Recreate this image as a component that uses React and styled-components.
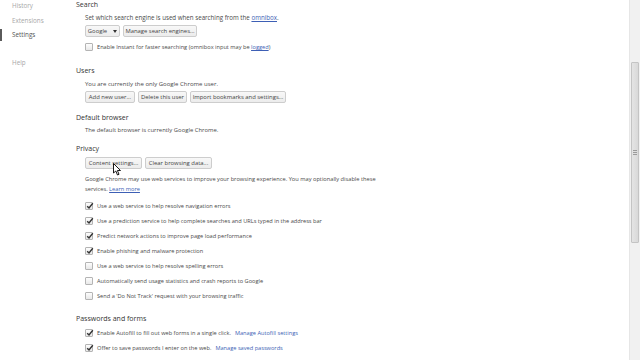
import styled, { createGlobalStyle } from 'styled-components';

const GlobalStyle = createGlobalStyle`
  html, body {
    margin: 0;
    padding: 0;
    background: #ffffff;
  }
  body {
    font-family: "Open Sans", "Noto Sans", "DejaVu Sans", sans-serif;
    color: #505050;
    -webkit-font-smoothing: antialiased;
  }
`;

const Page = styled.div`
  display: flex;
  width: 640px;
  height: 360px;
  overflow: hidden;
`;

const Sidebar = styled.nav`
  width: 76px;
  flex-shrink: 0;
  display: flex;
  flex-direction: column;
`;

const NavItem = styled.div`
  height: ${(p) => p.$h || 14}px;
  line-height: 10px;
  padding-left: 10px;
  padding-top: 1px;
  margin-top: ${(p) => p.$mt || 0}px;
  font-size: 6.3px;
  color: ${(p) => (p.$active ? '#555' : '#a8a8a8')};
  border-left: 2px solid ${(p) => (p.$active ? '#5a5a5a' : 'transparent')};
  box-sizing: border-box;
`;

const Main = styled.main`
  flex: 1;
  position: relative;
`;

const Heading = styled.h3`
  margin: ${(p) => p.$mt || 0}px 0 0;
  font-size: 7px;
  font-weight: 400;
  line-height: 10px;
  color: #333;
`;

const Body = styled.div`
  padding-left: 9px;
`;

const Text = styled.p`
  margin: ${(p) => p.$mt || 0}px 0 0;
  font-size: ${(p) => p.$fs || 6}px;
  line-height: ${(p) => p.$lh || 10}px;
  color: #4a4a4a;
  width: 300px;
`;

const Link = styled.a`
  color: #3d5fb5;
  text-decoration: ${(p) => (p.$plain ? 'none' : 'underline')};
  margin-left: ${(p) => p.$ml || 0}px;
`;

const ButtonRow = styled.div`
  display: flex;
  gap: 3px;
  margin-top: ${(p) => p.$mt || 0}px;
  height: 12px;
`;

const Button = styled.button`
  display: flex;
  align-items: center;
  justify-content: center;
  gap: 6px;
  width: ${(p) => p.$w}px;
  height: 12px;
  padding: 0;
  box-sizing: border-box;
  border: 1px solid #cdcdcd;
  border-radius: 2px;
  background: linear-gradient(#f8f8f8, #ececec);
  font-family: inherit;
  font-size: 5.9px;
  color: #444;
  white-space: nowrap;
`;

const Caret = styled.span`
  width: 0;
  height: 0;
  border-left: 2.5px solid transparent;
  border-right: 2.5px solid transparent;
  border-top: 3px solid #333;
`;

const CheckRow = styled.label`
  display: flex;
  align-items: center;
  gap: 4px;
  height: ${(p) => p.$h || 15}px;
  margin-top: ${(p) => p.$mt || 0}px;
  font-size: 5.65px;
  color: #4a4a4a;
  white-space: nowrap;
`;

const Box = styled.span`
  position: relative;
  width: 6px;
  height: 6px;
  border: 1px solid #b4b4b4;
  border-radius: 1px;
  background: linear-gradient(#fdfdfd, #e8e8e8);
  flex-shrink: 0;
  svg {
    position: absolute;
    left: 0;
    top: -1px;
  }
`;

const CheckList = styled.div`
  margin-top: 4.5px;
`;

const ScrollTrack = styled.div`
  width: 10px;
  flex-shrink: 0;
  background: #f1f1f1;
  border-left: 1px solid #e6e6e6;
  display: flex;
  flex-direction: column;
  align-items: center;
`;

const Thumb = styled.div`
  margin-top: 62px;
  width: 8px;
  height: 181px;
  box-sizing: border-box;
  border: 1px solid #c4c4c4;
  border-radius: 1px;
  background: linear-gradient(90deg, #e4e4e4, #d9d9d9);
  display: flex;
  flex-direction: column;
  justify-content: center;
  align-items: center;
  gap: 1px;
`;

const Grip = styled.span`
  width: 4px;
  height: 1px;
  background: #9a9a9a;
`;

const Cursor = styled.svg`
  position: absolute;
  left: 37px;
  top: 163px;
`;

const Checkbox = ({ checked }) => (
  <Box>
    {checked && (
      <svg width="8" height="8" viewBox="0 0 8 8">
        <path d="M1.2 4.2 L3 6 L6.8 1.2" fill="none" stroke="#333" strokeWidth="1.4" />
      </svg>
    )}
  </Box>
);

const Check = ({ checked, children, h, mt }) => (
  <CheckRow $h={h} $mt={mt}>
    <Checkbox checked={checked} />
    <span>{children}</span>
  </CheckRow>
);

const privacyRows = [
  [true, 'Use a web service to help resolve navigation errors'],
  [true, 'Use a prediction service to help complete searches and URLs typed in the address bar'],
  [true, 'Predict network actions to improve page load performance'],
  [true, 'Enable phishing and malware protection'],
  [false, 'Use a web service to help resolve spelling errors'],
  [false, 'Automatically send usage statistics and crash reports to Google'],
  [false, "Send a 'Do Not Track' request with your browsing traffic"],
];

const App = () => {
  return (
    <>
      <GlobalStyle />
      <Page>
        <Sidebar>
          <NavItem>History</NavItem>
          <NavItem $mt={1}>Extensions</NavItem>
          <NavItem $active $h={12}>Settings</NavItem>
          <NavItem $mt={16}>Help</NavItem>
        </Sidebar>

        <Main>
          <Heading>Search</Heading>
          <Body>
            <Text $mt={3} $fs={6.2}>
              Set which search engine is used when searching from the <Link>omnibox</Link>.
            </Text>
            <ButtonRow $mt={2}>
              <Button $w={35}>
                Google <Caret />
              </Button>
              <Button $w={74}>Manage search engines...</Button>
            </ButtonRow>
            <Check h={10} mt={5}>
              Enable Instant for faster searching (omnibox input may be <Link>logged</Link>)
            </Check>
          </Body>

          <Heading $mt={14}>Users</Heading>
          <Body>
            <Text $mt={3}>You are currently the only Google Chrome user.</Text>
            <ButtonRow $mt={2}>
              <Button $w={50}>Add new user...</Button>
              <Button $w={49}>Delete this user</Button>
              <Button $w={96}>Import bookmarks and settings...</Button>
            </ButtonRow>
          </Body>

          <Heading $mt={10}>Default browser</Heading>
          <Body>
            <Text $mt={2} $fs={5.9}>The default browser is currently Google Chrome.</Text>
          </Body>

          <Heading $mt={9}>Privacy</Heading>
          <Body>
            <ButtonRow $mt={3}>
              <Button $w={57}>Content settings...</Button>
              <Button $w={67}>Clear browsing data...</Button>
            </ButtonRow>
            <Text $mt={6} $lh={9.5} $fs={5.7}>
              Google Chrome may use web services to improve your browsing experience. You may optionally disable these
              services. <Link>Learn more</Link>
            </Text>
            <CheckList>
              {privacyRows.map(([checked, label]) => (
                <Check key={label} checked={checked}>
                  {label}
                </Check>
              ))}
            </CheckList>
          </Body>

          <Heading $mt={10}>Passwords and forms</Heading>
          <Body>
            <Check checked mt={2}>
              Enable Autofill to fill out web forms in a single click.
              <Link $plain $ml={4}>Manage Autofill settings</Link>
            </Check>
            <Check checked>
              Offer to save passwords I enter on the web.
              <Link $plain $ml={4}>Manage saved passwords</Link>
            </Check>
          </Body>

          <Cursor width="9" height="13" viewBox="0 0 9 13">
            <path d="M0.5 0.5 L0.5 10 L2.8 8 L4.5 12 L6 11.3 L4.4 7.5 L7.5 7.5 Z" fill="#fff" stroke="#000" strokeWidth="0.9" />
          </Cursor>
        </Main>

        <ScrollTrack>
          <Thumb>
            <Grip />
            <Grip />
            <Grip />
          </Thumb>
        </ScrollTrack>
      </Page>
    </>
  );
};

export default App;
